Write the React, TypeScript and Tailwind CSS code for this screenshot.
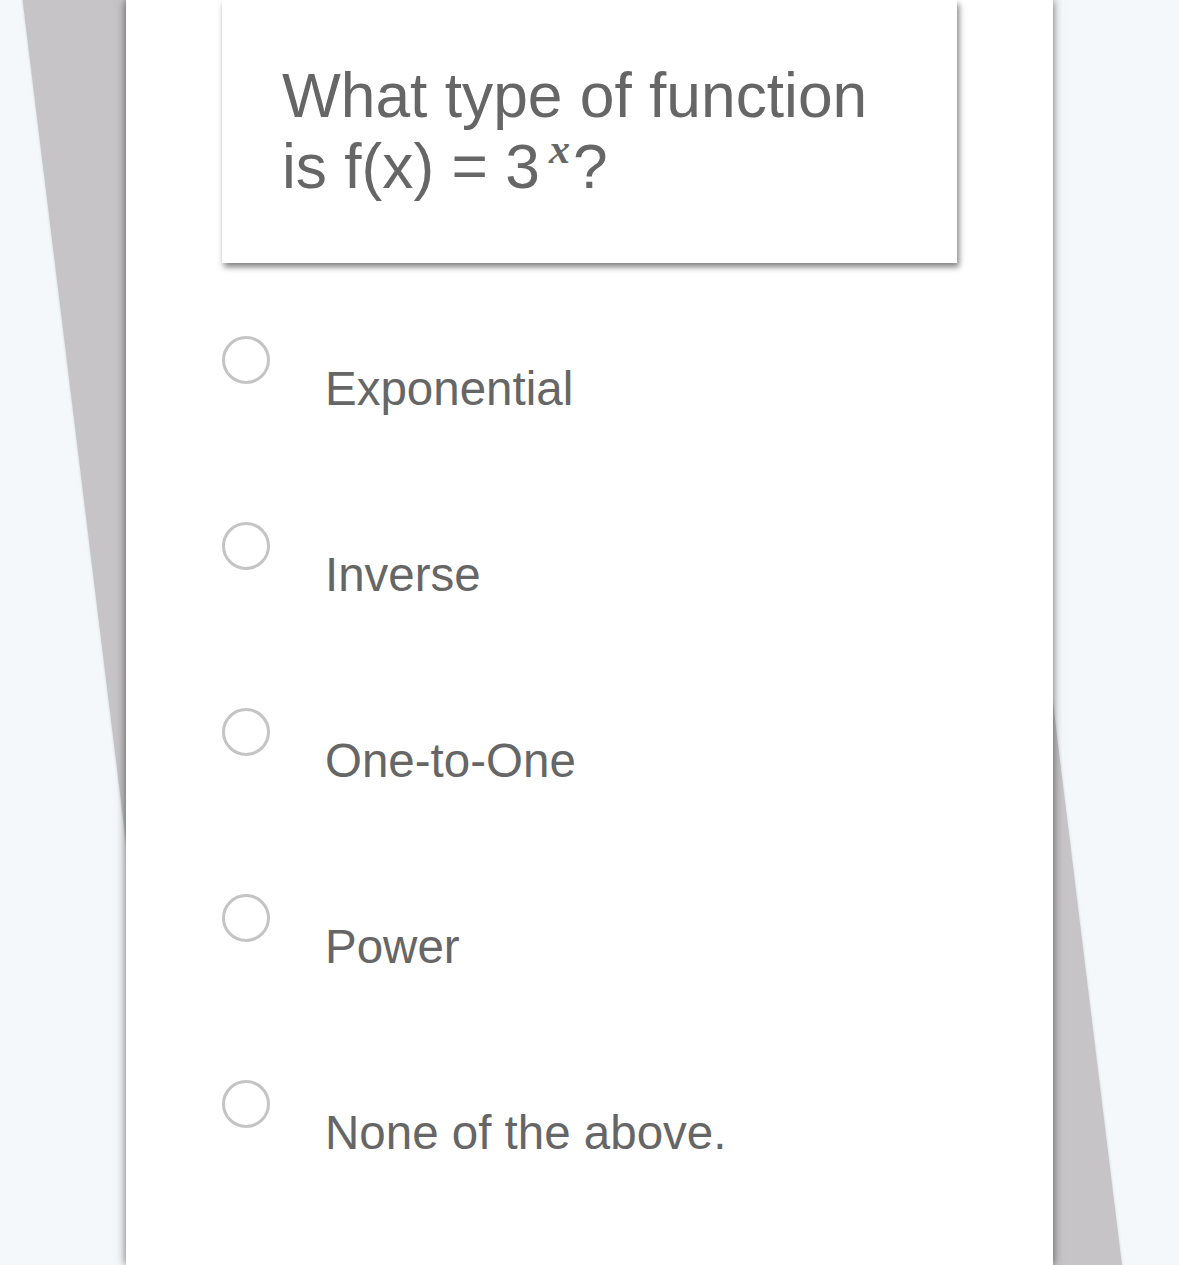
import React from 'react'

const options = ['Exponential', 'Inverse', 'One-to-One', 'Power', 'None of the above.']

export default function App() {
  return (
    <div className="relative h-[1265px] overflow-hidden bg-[#f5f8fb] font-['Liberation_Sans',Arial,sans-serif] text-[#666666]">
      {/* stacked card peeking out behind the main one */}
      <div className="absolute left-[128px] top-[-670px] h-[3000px] w-[937px] -rotate-[7deg] bg-[#c6c4c6] shadow-[0_0_3px_rgba(0,0,0,0.15)]" />

      <div className="relative z-10 mx-auto h-full w-[927px] bg-white px-[96px] shadow-[0_0_9px_rgba(0,0,0,0.6)]">
        {/* Question */}
        <section className="bg-white px-[60px] pt-[60px] pb-[61px] shadow-[2px_4px_6px_rgba(0,0,0,0.5)]">
          <h1 className="text-[62.3px] leading-[71px] font-normal">
            What type of function is f(x) = 3
            <span className="relative -top-[25px] ml-[9px] mr-[3px] align-baseline font-['Liberation_Serif',serif] text-[42px] font-semibold italic leading-none">
              x
            </span>
            ?
          </h1>
        </section>

        {/* Answers */}
        <ul className="mt-[73px]">
          {options.map((opt) => (
            <li key={opt} className="flex h-[186px] items-start">
              <span className="h-[48px] w-[48px] shrink-0 rounded-full border-[3px] border-[#c4c4c4]" />
              <span className="ml-[55px] pt-[26px] text-[47.5px] leading-[54px]">{opt}</span>
            </li>
          ))}
        </ul>
      </div>
    </div>
  )
}
